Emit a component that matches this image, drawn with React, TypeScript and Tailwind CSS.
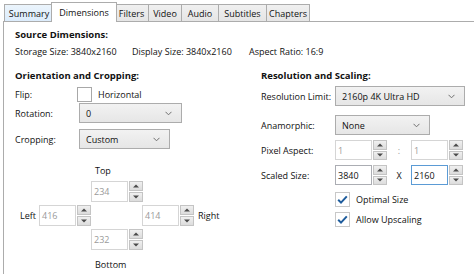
import React from "react";

const Chevron = () => (
  <svg width="7" height="5" viewBox="0 0 7 5" className="shrink-0">
    <path d="M0.5 0.8 L3.5 3.8 L6.5 0.8" fill="none" stroke="#707070" strokeWidth="1" />
  </svg>
);

const Combo = ({ text, w }: { text: string; w: string }) => (
  <div
    className={`${w} h-[20px] flex items-center justify-between pl-[6px] pr-[9px] border border-[#acacac] bg-gradient-to-b from-[#f2f2f2] to-[#e6e6e6] text-[#111]`}
  >
    <span>{text}</span>
    <Chevron />
  </div>
);

const Arrow = ({ up }: { up?: boolean }) => (
  <svg width="6" height="4" viewBox="0 0 6 4">
    {up ? <path d="M0 3.5 L3 0.5 L6 3.5 Z" fill="#4a4a4a" /> : <path d="M0 0.5 L3 3.5 L6 0.5 Z" fill="#4a4a4a" />}
  </svg>
);

const Spinner = ({
  value,
  disabled,
  focused,
  h = "h-[21px]",
}: {
  value: string;
  disabled?: boolean;
  focused?: boolean;
  h?: string;
}) => (
  <div className={`flex ${h} w-[52px] shrink-0`}>
    <div
      className={`w-[37px] h-full flex items-center pl-[2px] border ${
        focused ? "border-[#5b9bd5]" : disabled ? "border-[#d5d5d5]" : "border-[#abadb3]"
      } ${disabled ? "text-[#9a9a9a]" : "text-[#111]"} bg-white`}
    >
      {value}
    </div>
    <div className="ml-[1px] w-[14px] h-full flex flex-col gap-[1px]">
      <div className="flex-1 flex items-center justify-center border border-[#c4c4c4] bg-gradient-to-b from-[#f0f0f0] to-[#dcdcdc]">
        <Arrow up />
      </div>
      <div className="flex-1 flex items-center justify-center border border-[#c4c4c4] bg-gradient-to-b from-[#f0f0f0] to-[#dcdcdc]">
        <Arrow />
      </div>
    </div>
  </div>
);

const CheckBox = ({ checked }: { checked?: boolean }) => (
  <div
    className={`w-[15px] h-[15px] shrink-0 bg-white border ${
      checked ? "border-[#c8c8c8]" : "border-[#a8a8a8]"
    } flex items-center justify-center`}
  >
    {checked && (
      <svg width="13" height="13" viewBox="0 0 13 13">
        <path d="M2.2 6.8 L5 9.6 L10.8 3.4" fill="none" stroke="#1e5c9c" strokeWidth="2" />
      </svg>
    )}
  </div>
);

const tabs: { name: string; w: string }[] = [
  { name: "Summary", w: "w-[50px]" },
  { name: "Dimensions", w: "w-[66px]" },
  { name: "Filters", w: "w-[35px]" },
  { name: "Video", w: "w-[34px]" },
  { name: "Audio", w: "w-[38px]" },
  { name: "Subtitles", w: "w-[49px]" },
  { name: "Chapters", w: "w-[44px]" },
];

export default function App() {
  return (
    <div className="w-[474px] h-[274px] bg-white overflow-hidden font-['Open_Sans',sans-serif] text-[9px] text-[#111] leading-[13px]">
      {/* tab strip */}
      <div className="h-[21px] flex items-end pl-[4px]">
        {tabs.map((t, i) => {
          if (t.name === "Dimensions") {
            return (
              <div
                key={t.name}
                className={`${t.w} h-[20px] -mb-px -ml-[3px] -mr-[2px] relative z-10 bg-white border border-b-0 border-[#acacac] flex items-center justify-center pb-[1px]`}
              >
                {t.name}
              </div>
            );
          }
          return (
            <div
              key={t.name}
              className={`${t.w} h-[17px] ${i > 0 ? "-ml-px" : ""} border border-b-0 border-[#acacac] flex items-center justify-center ${
                t.name === "Summary"
                  ? "bg-gradient-to-b from-[#ebf4fc] to-[#dcecfc]"
                  : "bg-gradient-to-b from-[#f0f0f0] to-[#e5e5e5]"
              }`}
            >
              {t.name}
            </div>
          );
        })}
      </div>

      {/* panel */}
      <div className="ml-[3px] h-[253px] border-l border-t border-[#acacac] pl-[11px] pt-[6px]">
        <div className="font-bold text-[9.5px]">Source Dimensions:</div>
        <div className="mt-[4px] flex">
          <span className="w-[117px]">Storage Size: 3840x2160</span>
          <span className="w-[117px]">Display Size: 3840x2160</span>
          <span>Aspect Ratio: 16:9</span>
        </div>

        <div className="mt-[9px] flex">
          {/* left column */}
          <div className="w-[246px] flex flex-col">
            <div className="h-[16px] flex items-center font-bold text-[9.5px]">Orientation and Cropping:</div>
            <div className="mt-[4px] h-[15px] flex items-center">
              <span className="w-[62px]">Flip:</span>
              <CheckBox />
              <span className="ml-[6px]">Horizontal</span>
            </div>
            <div className="mt-[1px] flex items-center">
              <span className="w-[64px]">Rotation:</span>
              <Combo text="0" w="w-[103px]" />
            </div>
            <div className="mt-[6px] flex items-center">
              <span className="w-[64px]">Cropping:</span>
              <Combo text="Custom" w="w-[91px]" />
            </div>

            <div className="mt-[14px] h-[14px] flex items-center pl-[80px]">Top</div>
            <div className="mt-[4px] pl-[76px]">
              <Spinner value="234" disabled />
            </div>
            <div className="mt-[3px] flex items-center">
              <span className="ml-[5px] w-[19px]">Left</span>
              <Spinner value="416" disabled />
              <div className="w-[51px] shrink-0" />
              <Spinner value="414" disabled />
              <span className="ml-[4px]">Right</span>
            </div>
            <div className="mt-[3px] pl-[76px]">
              <Spinner value="232" disabled />
            </div>
            <div className="mt-[7px] h-[14px] flex items-center pl-[80px]">Bottom</div>
          </div>

          {/* right column */}
          <div className="flex flex-col">
            <div className="h-[16px] flex items-center font-bold text-[9.5px]">Resolution and Scaling:</div>
            <div className="mt-[3px] flex items-center">
              <span className="w-[74px]">Resolution Limit:</span>
              <Combo text="2160p 4K Ultra HD" w="w-[130px]" />
            </div>
            <div className="mt-[9px] flex items-center">
              <span className="w-[74px]">Anamorphic:</span>
              <Combo text="None" w="w-[95px]" />
            </div>
            <div className="mt-[5px] flex items-center">
              <span className="w-[74px] text-[#111]">Pixel Aspect:</span>
              <Spinner value="1" disabled h="h-[20px]" />
              <span className="w-[24px] text-center text-[#9a9a9a]">:</span>
              <Spinner value="1" disabled h="h-[20px]" />
            </div>
            <div className="mt-[5px] flex items-center">
              <span className="w-[74px]">Scaled Size:</span>
              <Spinner value="3840" h="h-[20px]" />
              <span className="w-[24px] text-center">X</span>
              <Spinner value="2160" focused h="h-[20px]" />
            </div>
            <div className="mt-[7px] h-[15px] flex items-center pl-[74px]">
              <CheckBox checked />
              <span className="ml-[6px]">Optimal Size</span>
            </div>
            <div className="mt-[5px] h-[15px] flex items-center pl-[74px]">
              <CheckBox checked />
              <span className="ml-[6px]">Allow Upscaling</span>
            </div>
          </div>
        </div>
      </div>
    </div>
  );
}
